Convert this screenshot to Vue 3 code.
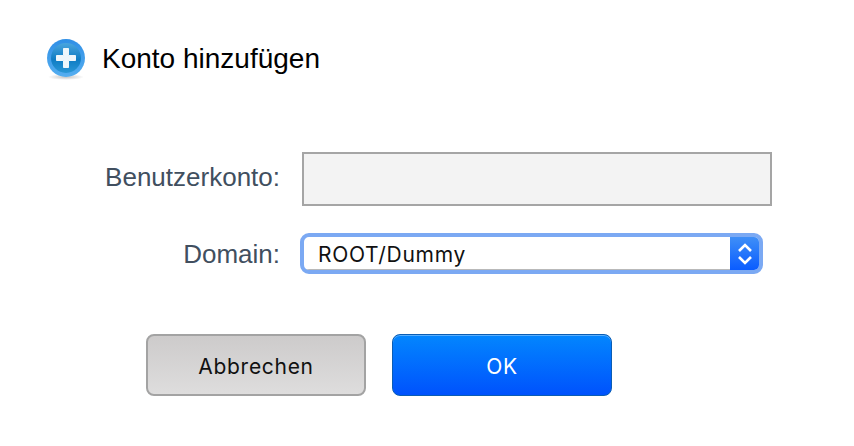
<template>
  <div class="dialog">
    <div class="dialog-title">
      <svg class="add-icon" width="40" height="44" viewBox="0 0 40 44">
        <defs>
          <linearGradient id="ringFill" x1="0" y1="0" x2="0" y2="1">
            <stop offset="0" stop-color="#2f8fe6" />
            <stop offset="1" stop-color="#55aef0" />
          </linearGradient>
          <linearGradient id="coreFill" x1="0" y1="0" x2="0" y2="1">
            <stop offset="0" stop-color="#4aa5de" />
            <stop offset="0.55" stop-color="#0f7cc4" />
            <stop offset="1" stop-color="#2a97d6" />
          </linearGradient>
          <radialGradient id="shadowFill">
            <stop offset="0" stop-color="#c4c4c4" />
            <stop offset="1" stop-color="#ffffff" />
          </radialGradient>
        </defs>
        <ellipse cx="20" cy="39" rx="18" ry="3" fill="url(#shadowFill)" />
        <circle cx="20" cy="20" r="19" fill="url(#ringFill)" />
        <circle cx="20" cy="20" r="15" fill="url(#coreFill)" />
        <path d="M17.5 10.5h5v7h7v5h-7v7h-5v-7h-7v-5h7z" fill="#eef6fb" stroke="#eef6fb" stroke-linejoin="round" />
      </svg>
      <h1>Konto hinzufügen</h1>
    </div>

    <div class="form">
      <div class="form-row">
        <label>Benutzerkonto:</label>
        <div class="text-field"></div>
      </div>
      <div class="form-row select-row">
        <label>Domain:</label>
        <div class="select-field">
          <span class="select-value">ROOT/Dummy</span>
          <span class="select-arrows">
            <svg width="18" height="28" viewBox="0 0 18 28" fill="none" stroke="#fff" stroke-width="2.6">
              <path d="M3 11 9 5l6 6" />
              <path d="M3 17l6 6 6-6" />
            </svg>
          </span>
        </div>
      </div>
    </div>

    <div class="actions">
      <button class="btn btn-cancel">Abbrechen</button>
      <button class="btn btn-ok">OK</button>
    </div>
  </div>
</template>

<script setup>
</script>

<style>
html, body {
  margin: 0;
  background: #fff;
}
</style>

<style scoped>
.dialog {
  width: 854px;
  height: 446px;
  box-sizing: border-box;
  padding-top: 38px;
  background: #fff;
  font-family: "Liberation Sans", Arial, sans-serif;
  overflow: hidden;
}

.dialog-title {
  display: flex;
  align-items: flex-start;
  gap: 16px;
  padding-left: 46px;
  height: 44px;
}

.add-icon {
  flex-shrink: 0;
}

.dialog-title h1 {
  margin: 0;
  font-size: 28px;
  font-weight: 400;
  line-height: 42px;
  color: #000;
}

.form {
  margin-top: 70px;
}

.form-row {
  display: flex;
  align-items: center;
  height: 54px;
}

.form-row label {
  width: 280px;
  padding-bottom: 4px;
  text-align: right;
  font-size: 26px;
  color: #414f5f;
}

.text-field {
  width: 470px;
  height: 54px;
  margin-left: 22px;
  box-sizing: border-box;
  background: #f3f3f3;
  border: 2px solid #a5a5a5;
}

.select-row {
  height: 41px;
  margin-top: 27px;
}

.select-row label {
  padding-bottom: 0;
  padding-top: 1px;
}

.select-field {
  display: flex;
  width: 463px;
  height: 41px;
  margin-left: 20px;
  box-sizing: border-box;
  background: #fff;
  border: 4px solid #7ba9f3;
  border-radius: 9px;
  overflow: hidden;
}

.select-value {
  flex: 1;
  padding-left: 14px;
  font-family: Inter, "Liberation Sans", sans-serif;
  font-size: 21px;
  letter-spacing: 0.7px;
  line-height: 35px;
  height: 32px;
  color: #111;
  border-bottom: 1px solid #b9b9b9;
}

.select-arrows {
  display: flex;
  align-items: center;
  justify-content: center;
  width: 29px;
  background: linear-gradient(#3f8ff7, #0a5cff);
}

.actions {
  display: flex;
  gap: 26px;
  margin-top: 60px;
  padding-left: 146px;
}

.btn {
  width: 220px;
  height: 62px;
  box-sizing: border-box;
  border-radius: 8px;
  font-family: Inter, "Liberation Sans", sans-serif;
  font-size: 21px;
  letter-spacing: 0.7px;
  padding: 2px 0 0;
}

.btn-cancel {
  background: linear-gradient(#cdcbcb, #dedddd);
  border: 2px solid #a3a3a3;
  color: #111;
}

.btn-ok {
  background: linear-gradient(#0386fe, #0052fd);
  border: 1px solid #0a5db4;
  box-shadow: inset 0 1px 0 #5aaefc;
  color: #fff;
}
</style>
